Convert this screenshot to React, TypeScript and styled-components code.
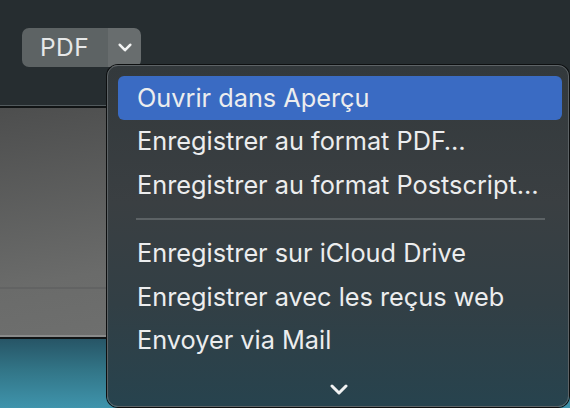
import React from "react";
import styled, { createGlobalStyle } from "styled-components";

const Global = createGlobalStyle`
  html, body { margin: 0; padding: 0; }
  body {
    width: 570px; height: 408px; overflow: hidden;
    font-family: Inter, "Liberation Sans", sans-serif;
    background: #262d30;
  }
  #root { width: 570px; height: 408px; }
`;

const Window = styled.div`
  position: relative;
  width: 570px;
  height: 408px;
  display: flex;
  flex-direction: column;
  overflow: hidden;
`;

const Toolbar = styled.div`
  height: 106px;
  flex: none;
  background: #262d30;
  box-sizing: border-box;
  padding: 28px 0 0 22px;
  border-bottom: 1px solid #525a5d;
`;

const SplitButton = styled.div`
  display: inline-flex;
  height: 39px;
  border-radius: 7px;
  overflow: hidden;
  color: #e6e8e8;
`;

const ButtonMain = styled.div`
  width: 86px;
  display: flex;
  align-items: center;
  justify-content: center;
  background: #5d6364;
  font-size: 24.5px;
  letter-spacing: 0.4px;
  padding: 0 1px 1px 0;
  box-sizing: border-box;
`;

const ButtonArrow = styled.div`
  width: 33px;
  display: flex;
  align-items: center;
  justify-content: center;
  background: #686d6e;
`;

const Panel = styled.div`
  flex: none;
  height: 229px;
  border-top: 2px solid #111415;
  border-bottom: 2px solid #111415;
  box-shadow: inset 0 -2px 0 #8a8b8b;
  background: linear-gradient(170deg, #4d4e4e 0%, #6a6b6a 55%, #737473 100%);
  display: flex;
  flex-direction: column;
`;

const PanelTop = styled.div`
  flex: none;
  height: 179px;
  border-bottom: 2px solid #626363;
`;

const Desktop = styled.div`
  flex: 1;
  background: linear-gradient(180deg, #275566 0%, #327587 45%, #3f94ac 100%);
`;

const Menu = styled.div`
  position: absolute;
  left: 107px;
  top: 65px;
  width: 462px;
  height: 342px;
  box-sizing: border-box;
  border-radius: 11px;
  border: 1px solid #5d6366;
  box-shadow: 0 0 0 1px #0d0f10;
  background: linear-gradient(180deg, #33393c 0%, #3a3f42 40%, #323f45 70%, #27434e 100%);
  padding: 10px 6px 0 10px;
  display: flex;
  flex-direction: column;
`;

const Item = styled.div<{ $active?: boolean }>`
  height: 43.5px;
  flex: none;
  display: flex;
  align-items: center;
  padding-left: 19px;
  padding-bottom: 1px;
  box-sizing: border-box;
  border-radius: 6px;
  font-size: 25.3px;
  color: #ecedee;
  background: ${(p) => (p.$active ? "#3a6bc3" : "transparent")};
  white-space: nowrap;
`;

const Separator = styled.div`
  height: 2px;
  margin: 11px 17px 12px 18px;
  background: #5c6265;
  flex: none;
`;

const More = styled.div`
  flex: none;
  height: 54px;
  display: flex;
  align-items: center;
  justify-content: center;
  padding-right: 2px;
`;

const Chevron = ({ w, h, stroke }: { w: number; h: number; stroke: number }) => (
  <svg width={w} height={h} viewBox={`0 0 ${w} ${h}`} fill="none">
    <path
      d={`M${stroke / 2 + 0.5} ${stroke / 2 + 0.5} L${w / 2} ${h - stroke / 2 - 0.5} L${w - stroke / 2 - 0.5} ${stroke / 2 + 0.5}`}
      stroke="#f2f3f3"
      strokeWidth={stroke}
      strokeLinecap="round"
      strokeLinejoin="round"
    />
  </svg>
);

export default function App() {
  return (
    <>
      <Global />
      <Window>
        <Toolbar>
          <SplitButton>
            <ButtonMain>PDF</ButtonMain>
            <ButtonArrow>
              <Chevron w={14} h={9} stroke={2.6} />
            </ButtonArrow>
          </SplitButton>
        </Toolbar>
        <Panel>
          <PanelTop />
        </Panel>
        <Desktop />
        <Menu>
          <Item $active>Ouvrir dans Aperçu</Item>
          <Item>Enregistrer au format PDF…</Item>
          <Item>Enregistrer au format Postscript…</Item>
          <Separator />
          <Item>Enregistrer sur iCloud Drive</Item>
          <Item>Enregistrer avec les reçus web</Item>
          <Item>Envoyer via Mail</Item>
          <More>
            <Chevron w={18} h={11} stroke={3} />
          </More>
        </Menu>
      </Window>
    </>
  );
}
